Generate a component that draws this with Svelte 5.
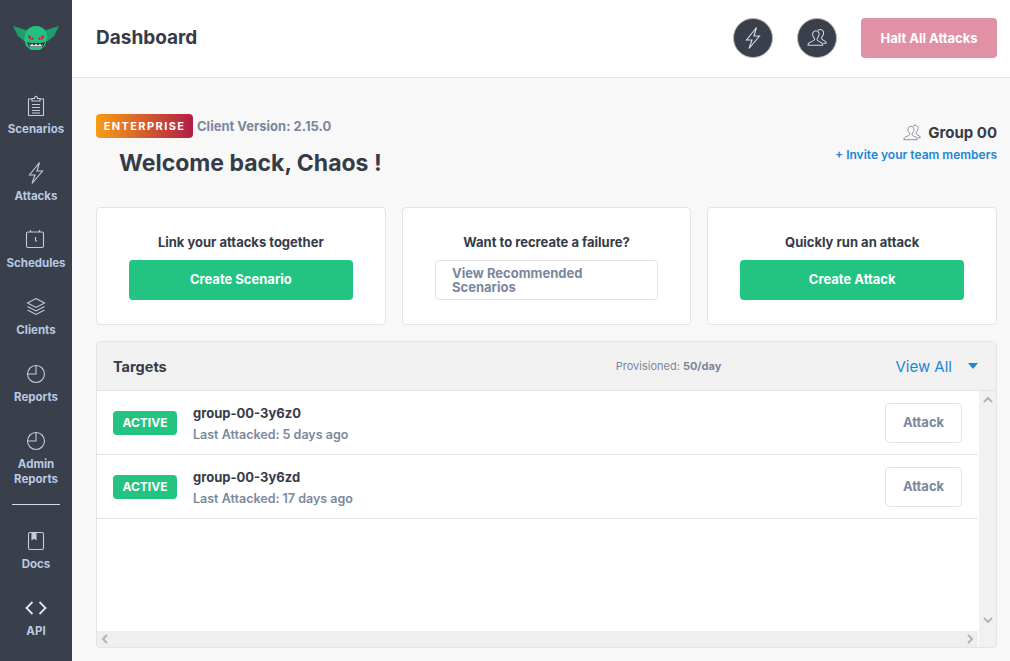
<script>
  const targets = [
    { name: 'group-00-3y6z0', last: '5 days ago' },
    { name: 'group-00-3y6zd', last: '17 days ago' }
  ]
</script>

{#snippet people()}
  <path d="M9.500 13.200c-.2-1-.9-1.500-1.400-2.200-1-1.300-1.200-3-.7-4.500.5-1.500 1.800-2.500 3.300-2.500 1.600 0 2.900 1 3.400 2.500.5 1.500.2 3.200-.8 4.500-.5.700-1.100 1.200-1.300 2.200-.2 1.300.7 1.900 2 2.500 1.400.6 3.100 1.200 3.800 2.300.3.600.4 1.300.4 2H2.200c0-.7.100-1.400.5-2 .7-1.100 2.400-1.700 3.800-2.300 1.300-.6 3.200-1.200 3-2.500z" />
  <path d="M13 3.900c.6-.7 1.500-1.200 2.600-1.200 1.600 0 2.900 1 3.400 2.500.5 1.500.2 3.200-.8 4.500-.5.700-1.100 1.200-1.300 2.200-.2 1.300.7 1.900 2 2.500 1 .5 1.900.9 2.500 1.500.4.500.5 1.200.5 1.800h-3" />
{/snippet}

{#snippet bolt()}
  <path d="M15.500 1.500L5.500 14H11L8 22.500 18.500 10H13z" />
{/snippet}

{#snippet pie()}
  <circle cx="12" cy="12" r="8.500" />
  <path d="M12 3.500V12H3.500" />
{/snippet}

<div class="app">
  <nav class="sidebar">
    <div class="logo">
      <svg viewBox="0 0 48 26" width="48" height="26" aria-hidden="true">
        <path d="M1 1l13 4 2 2-1 9-3 0-6-5z" fill="#1e9e6b" />
        <path d="M47 1l-13 4-2 2 1 9 3 0 6-5z" fill="#1e9e6b" />
        <path d="M14 6c2-3 6-5 10-5s8 2 10 5l1 8-2 7-5 4H19l-5-4-2-7z" fill="#24c07f" />
        <path d="M16 10l6 3-1 2-4-1zM32 10l-6 3 1 2 4-1z" fill="#b3213f" />
        <rect x="18.500" y="12" width="2" height="2" fill="#f0486a" />
        <rect x="27.500" y="12" width="2" height="2" fill="#f0486a" />
        <path d="M15 17l4 1h10l4-1-2 5H17z" fill="#23352f" />
        <path d="M17 18.500l1.500 2 1.500-2 2 2 2-2 2 2 2-2 1.500 2 1.500-2-1 3H18z" fill="#d9e4df" />
      </svg>
    </div>
    <a class="nav-item">
      <svg viewBox="0 0 24 24" class="nav-icon" aria-hidden="true">
        <path d="M8 5H4.500v16.500h15V5H16" />
        <path d="M8 7V4.500h2.500c0-1.200.7-2.300 1.500-2.300s1.500 1.100 1.500 2.300H16V7z" />
        <path d="M8 10.500h8M8 13.500h8M8 16.500h8M8 19h8" />
      </svg>
      <span>Scenarios</span>
    </a>
    <a class="nav-item">
      <svg viewBox="0 0 24 24" class="nav-icon" aria-hidden="true">{@render bolt()}</svg>
      <span>Attacks</span>
    </a>
    <a class="nav-item">
      <svg viewBox="0 0 24 24" class="nav-icon" aria-hidden="true">
        <rect x="2.500" y="4" width="17" height="15.500" rx="1.500" />
        <path d="M6.500 2v2M15.500 2v2M11.500 9v3.500l1.500 1" />
      </svg>
      <span>Schedules</span>
    </a>
    <a class="nav-item">
      <svg viewBox="0 0 24 24" class="nav-icon" aria-hidden="true">
        <path d="M12 3.500l8.500 4.500-8.500 4.500L3.500 8z" />
        <path d="M3.500 11.500L12 16l8.500-4.500" />
        <path d="M3.500 15L12 19.500l8.500-4.500" />
      </svg>
      <span>Clients</span>
    </a>
    <a class="nav-item">
      <svg viewBox="0 0 24 24" class="nav-icon" aria-hidden="true">{@render pie()}</svg>
      <span>Reports</span>
    </a>
    <a class="nav-item tall">
      <svg viewBox="0 0 24 24" class="nav-icon" aria-hidden="true">{@render pie()}</svg>
      <span>Admin Reports</span>
    </a>
    <div class="nav-divider"></div>
    <a class="nav-item">
      <svg viewBox="0 0 24 24" class="nav-icon" aria-hidden="true">
        <rect x="4.500" y="3.500" width="15" height="17" rx="1.500" />
        <path class="solid" d="M8 3.500h4v7l-2-1.500-2 1.500z" />
      </svg>
      <span>Docs</span>
    </a>
    <a class="nav-item">
      <svg viewBox="0 0 24 24" class="nav-icon wide" aria-hidden="true">
        <path d="M8.500 6l-6 6 6 6M15.500 6l6 6-6 6" />
      </svg>
      <span>API</span>
    </a>
  </nav>

  <div class="page">
    <header class="topbar">
      <h1>Dashboard</h1>
      <div class="actions">
        <button class="round" aria-label="Attacks">
          <svg viewBox="0 0 24 24" width="24" height="24" aria-hidden="true">{@render bolt()}</svg>
        </button>
        <button class="round" aria-label="Account">
          <svg viewBox="0 0 24 24" width="22" height="22" aria-hidden="true">{@render people()}</svg>
        </button>
        <button class="halt">Halt All Attacks</button>
      </div>
    </header>

    <main class="content">
      <section class="welcome">
        <div>
          <div class="version">
            <span class="badge">ENTERPRISE</span>
            <span>Client Version: 2.15.0</span>
          </div>
          <h2>Welcome back, Chaos !</h2>
        </div>
        <div class="team">
          <div class="group">
            <svg viewBox="0 0 24 24" width="20" height="20" aria-hidden="true">{@render people()}</svg>
            <strong>Group 00</strong>
          </div>
          <a class="invite">+ Invite your team members</a>
        </div>
      </section>

      <section class="cards">
        <div class="card">
          <p>Link your attacks together</p>
          <button class="primary">Create Scenario</button>
        </div>
        <div class="card">
          <p>Want to recreate a failure?</p>
          <button class="outline">View Recommended Scenarios</button>
        </div>
        <div class="card">
          <p>Quickly run an attack</p>
          <button class="primary">Create Attack</button>
        </div>
      </section>

      <section class="targets">
        <div class="targets-head">
          <h3>Targets</h3>
          <span class="provisioned">Provisioned: <b>50/day</b></span>
          <a class="view-all">View All</a>
          <span class="caret"></span>
        </div>
        <div class="targets-body">
          <div class="scroll-area">
            <div class="rows">
              {#each targets as t}
                <div class="row">
                  <span class="active">ACTIVE</span>
                  <div class="info">
                    <div class="name">{t.name}</div>
                    <div class="last">Last Attacked: {t.last}</div>
                  </div>
                  <button class="attack">Attack</button>
                </div>
              {/each}
            </div>
            <div class="hbar">
              <svg viewBox="0 0 6 10" width="6" height="10" aria-hidden="true"><path d="M5 1L1 5l4 4" /></svg>
              <svg viewBox="0 0 6 10" width="6" height="10" aria-hidden="true"><path d="M1 1l4 4-4 4" /></svg>
            </div>
          </div>
          <div class="vbar">
            <svg viewBox="0 0 10 6" width="10" height="6" aria-hidden="true"><path d="M1 5l4-4 4 4" /></svg>
            <svg viewBox="0 0 10 6" width="10" height="6" aria-hidden="true"><path d="M1 1l4 4 4-4" /></svg>
          </div>
        </div>
      </section>
    </main>
  </div>
</div>

<style>
  :global(body) {
    margin: 0;
    background: #f8f8f8;
    font-family: "Inter", "Liberation Sans", sans-serif;
    color: #363b48;
    overflow: hidden;
  }
  .app {
    display: flex;
    height: 661px;
    width: 1010px;
    overflow: hidden;
  }

  .sidebar {
    width: 72px;
    flex: none;
    background: #3a3f4c;
    display: flex;
    flex-direction: column;
    align-items: center;
  }
  .logo {
    height: 90px;
    padding-top: 25px;
    box-sizing: border-box;
  }
  .nav-item {
    height: 67px;
    width: 100%;
    display: flex;
    flex-direction: column;
    align-items: center;
    color: #b9c9e4;
    font-size: 11.500px;
    font-weight: 700;
    line-height: 15px;
    text-align: center;
  }
  .nav-item span {
    margin-top: 4px;
  }
  .nav-item.tall {
    height: 79px;
  }
  .nav-item.tall span {
    width: 50px;
  }
  .nav-icon {
    width: 24px;
    height: 24px;
    margin-top: 4px;
    fill: none;
    stroke: #c5cbd8;
    stroke-width: 1.100;
  }
  .nav-icon.wide {
    stroke-width: 1.800;
    stroke: #e2e5ec;
  }
  .nav-icon .solid {
    fill: #c5cbd8;
  }
  .nav-divider {
    width: 48px;
    height: 1px;
    background: #d6dae3;
    margin-bottom: 20px;
    flex: none;
  }

  .page {
    flex: 1;
    min-width: 0;
    display: flex;
    flex-direction: column;
  }
  .topbar {
    height: 78px;
    box-sizing: border-box;
    flex: none;
    background: #fff;
    border-bottom: 1px solid #e4e4e4;
    display: flex;
    align-items: center;
    justify-content: space-between;
    padding: 0 13px 2px 24px;
  }
  h1 {
    margin: 0;
    font-size: 19px;
    font-weight: 700;
  }
  .actions {
    display: flex;
    align-items: center;
  }
  .round {
    width: 40px;
    height: 40px;
    padding: 0;
    border-radius: 50%;
    background: #3a3f4c;
    border: 1px solid #b5b5b5;
    margin-right: 24px;
    display: flex;
    align-items: center;
    justify-content: center;
  }
  .round svg {
    fill: none;
    stroke: #d9dce3;
    stroke-width: 1.100;
  }
  .halt {
    width: 136px;
    height: 40px;
    border: 0;
    border-radius: 4px;
    background: #e191a5;
    color: #fff;
    font: 700 13px "Inter", "Liberation Sans", sans-serif;
  }

  .content {
    padding: 36px 13px 0 24px;
    display: flex;
    flex-direction: column;
  }
  .welcome {
    display: flex;
    justify-content: space-between;
    height: 93px;
  }
  .version {
    display: flex;
    align-items: center;
    gap: 4px;
    color: #7b879f;
    font-size: 13px;
    font-weight: 700;
  }
  .badge {
    width: 97px;
    height: 24px;
    box-sizing: border-box;
    border-radius: 4px;
    background: linear-gradient(90deg, #f89c13, #b01e48);
    color: #fff;
    font-size: 11px;
    letter-spacing: 1.400px;
    text-align: center;
    line-height: 24px;
  }
  h2 {
    margin: 9px 0 0 23px;
    font-size: 23px;
    line-height: 32px;
    font-weight: 700;
  }
  .team {
    text-align: right;
    padding-top: 9px;
  }
  .group {
    display: flex;
    align-items: center;
    justify-content: flex-end;
    gap: 6px;
    font-size: 15px;
    line-height: 20px;
  }
  .group svg {
    fill: none;
    stroke: #7b879f;
    stroke-width: 1.100;
  }
  .invite {
    display: block;
    margin-top: 4px;
    font-size: 12px;
    font-weight: 600;
    line-height: 16px;
    color: #1a87d6;
  }

  .cards {
    display: grid;
    grid-template-columns: repeat(3, 1fr);
    gap: 16px;
  }
  .card {
    height: 118px;
    box-sizing: border-box;
    background: #fff;
    border: 1px solid #e4e4e4;
    border-radius: 4px;
    display: flex;
    flex-direction: column;
    align-items: center;
    padding-top: 25px;
  }
  .card p {
    margin: 0 0 9px;
    font-size: 13px;
    font-weight: 700;
    line-height: 18px;
  }
  .primary {
    width: 224px;
    height: 40px;
    padding: 0 0 3px;
    border: 0;
    border-radius: 4px;
    background: #23c382;
    color: #fff;
    font: 700 13px "Inter", "Liberation Sans", sans-serif;
  }
  .outline {
    width: 223px;
    height: 40px;
    box-sizing: border-box;
    background: #fff;
    border: 1px solid #e4e4e4;
    border-radius: 4px;
    color: #7b879f;
    padding: 0 16px;
    text-align: left;
    font: 700 13px/14px "Inter", "Liberation Sans", sans-serif;
  }

  .targets {
    margin-top: 16px;
    height: 307px;
    box-sizing: border-box;
    border: 1px solid #e4e4e4;
    border-radius: 4px;
    background: #fff;
    display: flex;
    flex-direction: column;
    overflow: hidden;
  }
  .targets-head {
    height: 49px;
    flex: none;
    box-sizing: border-box;
    background: #f1f1f1;
    border-bottom: 1px solid #e4e4e4;
    display: flex;
    align-items: center;
    padding: 0 18px 0 16px;
  }
  h3 {
    margin: 0;
    font-size: 14.500px;
    font-weight: 700;
  }
  .provisioned {
    margin-left: 449px;
    font-size: 11px;
    color: #7b879f;
  }
  .view-all {
    margin-left: auto;
    color: #1a87d6;
    font-size: 15px;
  }
  .caret {
    margin-left: 16px;
    border-left: 5px solid transparent;
    border-right: 5px solid transparent;
    border-top: 6px solid #1a87d6;
  }
  .targets-body {
    flex: 1;
    min-height: 0;
    display: flex;
  }
  .scroll-area {
    flex: 1;
    min-width: 0;
    margin-right: 1px;
    display: flex;
    flex-direction: column;
  }
  .rows {
    flex: 1;
    min-height: 0;
  }
  .row {
    height: 64px;
    box-sizing: border-box;
    border-bottom: 1px solid #e4e4e4;
    display: flex;
    align-items: center;
    padding: 0 16px;
  }
  .active {
    width: 64px;
    height: 24px;
    border-radius: 4px;
    background: #23c382;
    color: #fff;
    font-size: 12px;
    font-weight: 700;
    line-height: 24px;
    text-align: center;
  }
  .info {
    margin: 2px 0 0 16px;
  }
  .name {
    font-size: 13px;
    font-weight: 700;
    line-height: 20px;
  }
  .last {
    margin-top: 2px;
    font-size: 12.500px;
    font-weight: 600;
    color: #7b879f;
    line-height: 20px;
  }
  .attack {
    margin-left: auto;
    width: 77px;
    height: 40px;
    padding: 0 0 2px;
    background: #fff;
    border: 1px solid #e4e4e4;
    border-radius: 4px;
    color: #7b879f;
    font: 700 13px "Inter", "Liberation Sans", sans-serif;
  }
  .vbar {
    width: 17px;
    flex: none;
    background: #f1f1f1;
    display: flex;
    flex-direction: column;
    justify-content: flex-start;
    gap: 214px;
    align-items: center;
    padding-top: 6px;
    box-sizing: border-box;
  }
  .hbar {
    height: 16px;
    flex: none;
    background: #efefef;
    display: flex;
    justify-content: space-between;
    align-items: center;
    padding: 0 5px;
    box-sizing: border-box;
  }
  .vbar svg,
  .hbar svg {
    fill: none;
    stroke: #b4b4b4;
    stroke-width: 2;
  }
</style>
